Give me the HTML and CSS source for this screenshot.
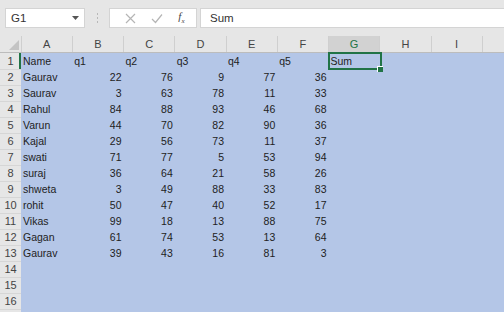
FILE: index.html
```html
<!DOCTYPE html>
<html>
<head>
    <meta charset="utf-8">
    <title>Sheet1 - Sum</title>
    <link rel="stylesheet" href="styles.css">
</head>
<body>
    <div class="formula-bar">
        <div class="name-box">
            <span>G1</span>
            <svg class="drop" width="7" height="4" viewBox="0 0 7 4"><path d="M0 0h7L3.5 4z" fill="#555"/></svg>
        </div>
        <div class="grip"><i></i><i></i><i></i></div>
        <div class="fx-box">
            <svg width="11" height="11" viewBox="0 0 11 11"><path d="M1 1l9 9M10 1l-9 9" stroke="#b5b5b5" stroke-width="1.2" fill="none"/></svg>
            <svg width="12" height="11" viewBox="0 0 12 11"><path d="M1 6l3.5 3.5L11 1.5" stroke="#b5b5b5" stroke-width="1.2" fill="none"/></svg>
            <span class="fx">f<sub>x</sub></span>
        </div>
        <div class="formula-input">Sum</div>
    </div>

    <table class="sheet">
        <colgroup>
            <col class="rh">
            <col class="c"><col class="c"><col class="c"><col class="c"><col class="c">
            <col class="c"><col class="c"><col class="c"><col class="c">
            <col>
        </colgroup>
        <thead>
            <tr>
                <th class="corner"><span class="tri"></span></th>
                <th>A</th><th>B</th><th>C</th><th>D</th><th>E</th><th>F</th>
                <th class="sel">G</th><th>H</th><th>I</th><th></th>
            </tr>
        </thead>
        <tbody>
            <tr><th class="active-row">1</th><td>Name</td><td>q1</td><td>q2</td><td>q3</td><td>q4</td><td>q5</td><td class="active">Sum</td><td></td><td></td><td></td></tr>
            <tr><th>2</th><td>Gaurav</td><td class="n">22</td><td class="n">76</td><td class="n">9</td><td class="n">77</td><td class="n">36</td><td></td><td></td><td></td><td></td></tr>
            <tr><th>3</th><td>Saurav</td><td class="n">3</td><td class="n">63</td><td class="n">78</td><td class="n">11</td><td class="n">33</td><td></td><td></td><td></td><td></td></tr>
            <tr><th>4</th><td>Rahul</td><td class="n">84</td><td class="n">88</td><td class="n">93</td><td class="n">46</td><td class="n">68</td><td></td><td></td><td></td><td></td></tr>
            <tr><th>5</th><td>Varun</td><td class="n">44</td><td class="n">70</td><td class="n">82</td><td class="n">90</td><td class="n">36</td><td></td><td></td><td></td><td></td></tr>
            <tr><th>6</th><td>Kajal</td><td class="n">29</td><td class="n">56</td><td class="n">73</td><td class="n">11</td><td class="n">37</td><td></td><td></td><td></td><td></td></tr>
            <tr><th>7</th><td>swati</td><td class="n">71</td><td class="n">77</td><td class="n">5</td><td class="n">53</td><td class="n">94</td><td></td><td></td><td></td><td></td></tr>
            <tr><th>8</th><td>suraj</td><td class="n">36</td><td class="n">64</td><td class="n">21</td><td class="n">58</td><td class="n">26</td><td></td><td></td><td></td><td></td></tr>
            <tr><th>9</th><td>shweta</td><td class="n">3</td><td class="n">49</td><td class="n">88</td><td class="n">33</td><td class="n">83</td><td></td><td></td><td></td><td></td></tr>
            <tr><th>10</th><td>rohit</td><td class="n">50</td><td class="n">47</td><td class="n">40</td><td class="n">52</td><td class="n">17</td><td></td><td></td><td></td><td></td></tr>
            <tr><th>11</th><td>Vikas</td><td class="n">99</td><td class="n">18</td><td class="n">13</td><td class="n">88</td><td class="n">75</td><td></td><td></td><td></td><td></td></tr>
            <tr><th>12</th><td>Gagan</td><td class="n">61</td><td class="n">74</td><td class="n">53</td><td class="n">13</td><td class="n">64</td><td></td><td></td><td></td><td></td></tr>
            <tr><th>13</th><td>Gaurav</td><td class="n">39</td><td class="n">43</td><td class="n">16</td><td class="n">81</td><td class="n">3</td><td></td><td></td><td></td><td></td></tr>
            <tr><th>14</th><td></td><td></td><td></td><td></td><td></td><td></td><td></td><td></td><td></td><td></td></tr>
            <tr><th>15</th><td></td><td></td><td></td><td></td><td></td><td></td><td></td><td></td><td></td><td></td></tr>
            <tr><th>16</th><td></td><td></td><td></td><td></td><td></td><td></td><td></td><td></td><td></td><td></td></tr>
            <tr><th></th><td></td><td></td><td></td><td></td><td></td><td></td><td></td><td></td><td></td><td></td></tr>
        </tbody>
    </table>
</body>
</html>
```

FILE: styles.css
```css
body {
    margin: 0;
    width: 504px;
    height: 312px;
    overflow: hidden;
    background: #e6e6e6;
    font-family: "Liberation Sans", Arial, sans-serif;
    font-size: 10.5px;
    color: #222;
}
.formula-bar {
    height: 36px;
    display: flex;
    align-items: flex-start;
    padding-top: 8px;
    box-sizing: border-box;
    background: #e6e6e6;
}
.name-box {
    margin-left: 5px;
    width: 80px;
    height: 20px;
    box-sizing: border-box;
    background: #fff;
    border: 1px solid #d4d4d4;
    display: flex;
    align-items: center;
    justify-content: space-between;
    padding: 0 5px 0 5px;
    font-size: 11.5px;
    color: #333;
}
.grip {
    width: 24px;
    height: 20px;
    display: flex;
    flex-direction: column;
    align-items: center;
    justify-content: center;
    gap: 2px;
}
.grip i {
    width: 1px;
    height: 2px;
    background: #b8b8b8;
}
.fx-box {
    width: 88px;
    height: 20px;
    box-sizing: border-box;
    background: #fff;
    border: 1px solid #d4d4d4;
    display: flex;
    align-items: center;
    justify-content: space-around;
    padding: 0 4px 0 8px;
}
.fx {
    font-family: "Liberation Serif", serif;
    font-style: italic;
    font-size: 11px;
    color: #444;
}
.fx sub {
    font-size: 7px;
}
.formula-input {
    margin-left: 3px;
    flex: 1;
    height: 20px;
    box-sizing: border-box;
    background: #fff;
    border: 1px solid #d4d4d4;
    border-right: none;
    line-height: 18px;
    padding-left: 9px;
    font-size: 11.5px;
    color: #333;
}
.sheet {
    width: 504px;
    table-layout: fixed;
    border-collapse: collapse;
    border-spacing: 0;
}
col.rh {
    width: 21px;
}
col.c {
    width: 51.25px;
}
.sheet thead th {
    height: 16px;
    padding: 0;
    background: #e6e6e6;
    border-left: 1px solid #cfcfcf;
    border-bottom: 1px solid #bcbcbc;
    font-weight: normal;
    font-size: 11px;
    color: #444;
    text-align: center;
    line-height: 16px;
}
.sheet thead th.corner {
    border-left: none;
    position: relative;
}
.tri {
    position: absolute;
    right: 2px;
    bottom: 2px;
    width: 0;
    height: 0;
    border-left: 10px solid transparent;
    border-bottom: 10px solid #c4c4c4;
}
.sheet thead th.sel {
    background: #d2d2d2;
    color: #217346;
}
.sheet tbody th {
    height: 16px;
    padding: 0;
    background: #e6e6e6;
    box-shadow: inset 0 1px 0 #d6d6d6;
    font-weight: normal;
    font-size: 11px;
    color: #444;
    text-align: center;
    line-height: 16px;
}
.sheet tbody th.active-row {
    box-shadow: inset -2px 0 0 #217346;
}
.sheet td {
    height: 16px;
    padding: 0 2px;
    background: #b4c6e7;
    line-height: 16px;
    white-space: nowrap;
    overflow: hidden;
}
.sheet td.n {
    text-align: right;
}
.sheet td.active {
    position: relative;
    overflow: visible;
}
.sheet td.active::after {
    content: "";
    position: absolute;
    left: -1px;
    top: -1px;
    right: -2px;
    bottom: -1px;
    border: 2px solid #217346;
}
.sheet td.active::before {
    content: "";
    position: absolute;
    right: -3px;
    bottom: -3px;
    width: 5px;
    height: 5px;
    background: #217346;
    border-left: 1px solid #fff;
    border-top: 1px solid #fff;
    z-index: 1;
}
```
